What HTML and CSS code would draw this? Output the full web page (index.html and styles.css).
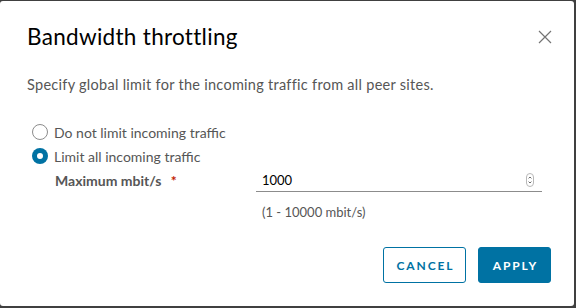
FILE: index.html
```html
<!DOCTYPE html>
<html lang="en">
<head>
<meta charset="utf-8">
<title>Bandwidth throttling</title>
<link rel="stylesheet" href="styles.css">
</head>
<body>
<div class="modal" role="dialog" aria-labelledby="modal-title">
  <div class="modal-header">
    <h3 class="modal-title" id="modal-title">Bandwidth throttling</h3>
    <button class="close" aria-label="Close">
      <svg width="14" height="14" viewBox="0 0 14 14" aria-hidden="true">
        <path d="M1 1 L13 13 M13 1 L1 13" stroke="#747474" stroke-width="1.2" fill="none"/>
      </svg>
    </button>
  </div>
  <div class="modal-body">
    <p class="desc">Specify global limit for the incoming traffic from all peer sites.</p>
    <label class="radio-row">
      <span class="radio"></span>
      <span class="radio-label">Do not limit incoming traffic</span>
    </label>
    <label class="radio-row">
      <span class="radio checked"></span>
      <span class="radio-label">Limit all incoming traffic</span>
    </label>
    <div class="field-row">
      <span class="field-label">Maximum mbit/s <span class="req">*</span></span>
      <div class="input-wrap">
        <span class="input-value">1000</span>
        <svg class="spinner" width="8" height="14" viewBox="0 0 8 14" aria-hidden="true">
          <rect x="0.5" y="0.5" width="7" height="13" rx="3.5" fill="#fff" stroke="#b8b8b8"/>
          <path d="M2.6 5.4 L4 4 L5.4 5.4 M2.6 8.6 L4 10 L5.4 8.6" stroke="#5a5a5a" stroke-width="0.9" fill="none"/>
        </svg>
      </div>
    </div>
    <div class="helper">(1 - 10000 mbit/s)</div>
  </div>
  <div class="modal-footer">
    <button class="btn btn-outline">CANCEL</button>
    <button class="btn btn-primary">APPLY</button>
  </div>
</div>
</body>
</html>
```

FILE: styles.css
```css
html, body {
  margin: 0;
  padding: 0;
}
body {
  background: #404040;
  width: 576px;
  height: 308px;
  padding-top: 1px;
  box-sizing: border-box;
  font-family: Lato, "Open Sans", Arial, sans-serif;
  overflow: hidden;
}
.modal {
  width: 574px;
  height: 305px;
  background: #fff;
  border-radius: 3px;
  box-sizing: border-box;
  padding: 20px 23px 0 27px;
  display: flex;
  flex-direction: column;
}
.modal-header {
  display: flex;
  align-items: center;
  justify-content: space-between;
  height: 32px;
}
.modal-title {
  margin: 0;
  font-size: 22.5px;
  letter-spacing: 0.3px;
  line-height: 32px;
  font-weight: 400;
  color: #000;
}
.close {
  border: 0;
  background: none;
  padding: 0;
  width: 14px;
  height: 14px;
  margin-right: -1px;
  display: flex;
}
.modal-body {
  display: flex;
  flex-direction: column;
}
.desc {
  margin: 22px 0 0;
  font-size: 14.5px;
  letter-spacing: 0.28px;
  line-height: 20px;
  color: #565656;
}
.radio-row {
  display: flex;
  align-items: center;
  height: 24px;
  margin-left: 5px;
  font-size: 14px;
  color: #565656;
}
.radio-row:first-of-type {
  margin-top: 25px;
}
.radio {
  width: 16px;
  height: 16px;
  border-radius: 50%;
  box-sizing: border-box;
  border: 1px solid #8c8c8c;
  background: #fff;
  margin-right: 6px;
  flex: none;
}
.radio.checked {
  border: 0;
  box-shadow: inset 0 0 0 5px #0072a3;
}
.field-row {
  display: flex;
  align-items: center;
  height: 24px;
  padding-left: 28px;
}
.field-label {
  width: 201px;
  font-size: 14px;
  font-weight: 700;
  color: #565656;
}
.req {
  color: #c21d00;
  margin-left: 6px;
}
.input-wrap {
  width: 286px;
  height: 24px;
  box-sizing: border-box;
  border-bottom: 1px solid #8c8c8c;
  display: flex;
  align-items: center;
  justify-content: space-between;
  padding: 0 8px 0 6px;
}
.input-value {
  font-size: 13px;
  color: #000;
}
.spinner {
  display: block;
}
.helper {
  margin: 12px 0 0 235px;
  font-size: 13px;
  line-height: 16px;
  color: #565656;
}
.modal-footer {
  display: flex;
  justify-content: flex-end;
  gap: 12px;
  margin-top: 27px;
}
.btn {
  height: 36px;
  box-sizing: border-box;
  border-radius: 3px;
  font-family: inherit;
  font-size: 12px;
  font-weight: 700;
  letter-spacing: 1.9px;
  padding: 0 0 0 2px;
  border: 1px solid #0072a3;
}
.btn-outline {
  width: 83px;
  background: #fff;
  color: #0072a3;
}
.btn-primary {
  width: 73px;
  background: #0072a3;
  color: #fff;
}
```
